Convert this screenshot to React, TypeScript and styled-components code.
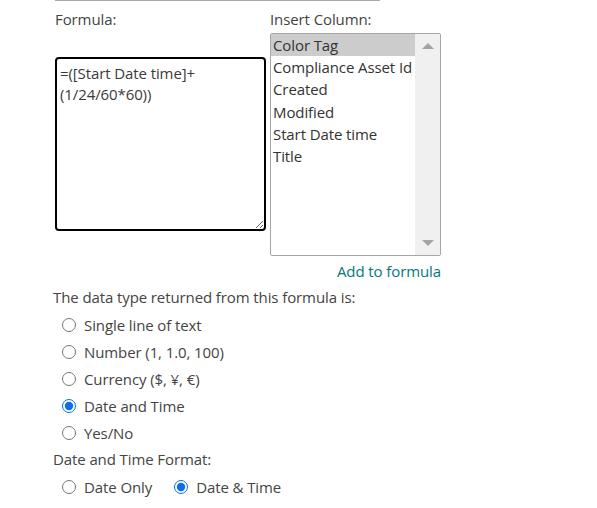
import React from "react";
import styled, { createGlobalStyle } from "styled-components";

const Global = createGlobalStyle`
  html, body { margin: 0; padding: 0; background: #fff; }
  body { font-family: "Open Sans", "Noto Sans", sans-serif; color: #444; }
`;

const Page = styled.div`
  width: 597px;
  height: 508px;
  padding-left: 53px;
  box-sizing: border-box;
  font-size: 15px;
  letter-spacing: -0.1px;
`;

const TopRule = styled.div`
  margin-left: 2px;
  width: 325px;
  height: 1px;
  background: #a8a8a8;
`;

const Columns = styled.div`
  display: flex;
  gap: 4px;
  margin-left: 2px;
  margin-top: 8px;
`;

const Col = styled.div<{ $w: number }>`
  display: flex;
  flex-direction: column;
  width: ${(p) => p.$w}px;
`;

const Label = styled.div`
  height: 20px;
  line-height: 20px;
  color: #444;
`;

const FormulaBox = styled.textarea`
  margin-top: 28px;
  width: 211px;
  height: 174px;
  box-sizing: border-box;
  border: 2px solid #000;
  border-radius: 4px;
  padding: 4px 2px 4px 3px;
  font-family: inherit;
  font-size: 15px;
  letter-spacing: -0.1px;
  line-height: 21px;
  color: #3a3a3a;
  outline: none;
  resize: both;
  overflow: hidden;
`;

const ListBox = styled.div`
  margin-top: 4px;
  width: 171px;
  height: 223px;
  box-sizing: border-box;
  border: 1px solid #a6a6a6;
  border-radius: 2px;
  display: flex;
`;

const Items = styled.div`
  flex: 1;
  min-width: 0;
  display: flex;
  flex-direction: column;
`;

const Item = styled.div<{ $sel?: boolean }>`
  height: 22.2px;
  line-height: 22px;
  padding-left: 2px;
  white-space: nowrap;
  overflow: hidden;
  color: #333;
  background: ${(p) => (p.$sel ? "#cccccc" : "transparent")};
`;

const ScrollTrack = styled.div`
  width: 25px;
  flex-shrink: 0;
  background: #f0f0f0;
  display: flex;
  flex-direction: column;
  justify-content: space-between;
  align-items: center;
  padding: 9px 0;
  box-sizing: border-box;
`;

const Arrow = styled.div<{ $down?: boolean }>`
  width: 0;
  height: 0;
  border-left: 6px solid transparent;
  border-right: 6px solid transparent;
  ${(p) =>
    p.$down
      ? "border-top: 6px solid #a3a3a3;"
      : "border-bottom: 6px solid #a3a3a3;"}
`;

const AddLink = styled.a`
  align-self: flex-end;
  margin-top: 5px;
  line-height: 20px;
  color: #03787c;
  text-decoration: none;
  cursor: pointer;
`;

const Section = styled.div`
  margin-top: 3px;
`;

const RadioList = styled.div<{ $row?: boolean }>`
  display: flex;
  flex-direction: ${(p) => (p.$row ? "row" : "column")};
  gap: ${(p) => (p.$row ? "22px" : "0")};
  padding-left: 9px;
`;

const RadioLabel = styled.label`
  display: flex;
  align-items: center;
  height: 27px;
  gap: 8px;
  color: #444;
`;

const RadioInput = styled.input`
  margin: 0;
  width: 14px;
  height: 14px;
  accent-color: #0a6fe8;
`;

const SubLabel = styled.div`
  height: 27px;
  line-height: 27px;
`;

const types = [
  "Single line of text",
  "Number (1, 1.0, 100)",
  "Currency ($, ¥, €)",
  "Date and Time",
  "Yes/No",
];

const columns = [
  "Color Tag",
  "Compliance Asset Id",
  "Created",
  "Modified",
  "Start Date time",
  "Title",
];

export default function App() {
  return (
    <>
      <Global />
      <Page>
        <TopRule />
        <Columns>
          <Col $w={211}>
            <Label>Formula:</Label>
            <FormulaBox defaultValue="=([Start Date time]+(1/24/60*60))" />
          </Col>
          <Col $w={171}>
            <Label>Insert Column:</Label>
            <ListBox>
              <Items>
                {columns.map((c, i) => (
                  <Item key={c} $sel={i === 0}>
                    {c}
                  </Item>
                ))}
              </Items>
              <ScrollTrack>
                <Arrow />
                <Arrow $down />
              </ScrollTrack>
            </ListBox>
            <AddLink>Add to formula</AddLink>
          </Col>
        </Columns>
        <Section>
          <SubLabel>The data type returned from this formula is:</SubLabel>
          <RadioList>
            {types.map((t) => (
              <RadioLabel key={t}>
                <RadioInput
                  type="radio"
                  name="type"
                  defaultChecked={t === "Date and Time"}
                />
                {t}
              </RadioLabel>
            ))}
          </RadioList>
          <SubLabel>Date and Time Format:</SubLabel>
          <RadioList $row>
            <RadioLabel>
              <RadioInput type="radio" name="fmt" />
              Date Only
            </RadioLabel>
            <RadioLabel>
              <RadioInput type="radio" name="fmt" defaultChecked />
              Date &amp; Time
            </RadioLabel>
          </RadioList>
        </Section>
      </Page>
    </>
  );
}
